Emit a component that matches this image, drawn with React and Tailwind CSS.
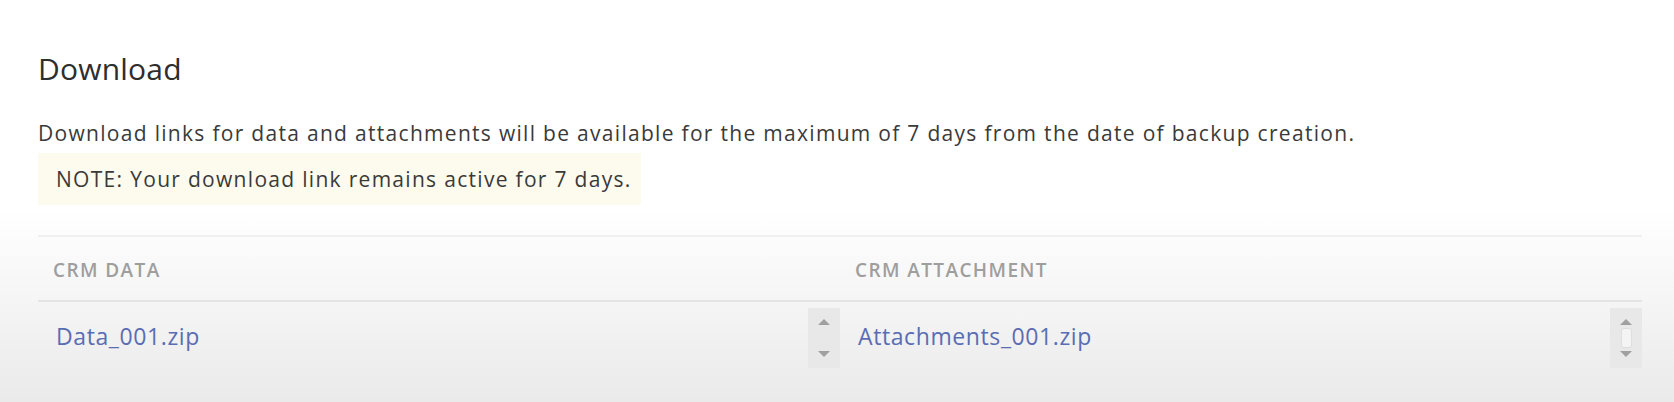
const Spinner = ({ thumb }) => (
  <div className="w-[32px] h-[60px] bg-[#e8e8e8] flex flex-col items-center justify-between py-[11px] shrink-0">
    <span className="w-0 h-0 border-x-[6px] border-x-transparent border-b-[6px] border-b-[#a0a0a0]" />
    {thumb && <span className="w-[11px] flex-1 my-[3px] rounded-[3px] bg-[#f4f4f4] border border-[#dedede]" />}
    <span className="w-0 h-0 border-x-[6px] border-x-transparent border-t-[6px] border-t-[#a0a0a0]" />
  </div>
);

const files = [
  { label: "CRM DATA", file: "Data_001.zip" },
  { label: "CRM ATTACHMENT", file: "Attachments_001.zip" },
];

export default function App() {
  return (
    <div className="w-[1674px] h-[402px] overflow-hidden bg-linear-to-b from-white from-[52%] to-[#eaeaea] font-['Open_Sans',sans-serif] text-[#333]">
      <div className="pl-[38px] pr-[32px] pt-[51px]">
        <h2 className="text-[30px] leading-[36px] tracking-[0.2px] text-[#2e2e2e]">Download</h2>

        <p className="mt-[32px] text-[21px] leading-[28px] tracking-[1.3px] text-[#3a3a3a]">
          Download links for data and attachments will be available for the maximum of 7 days from the date of backup creation.
        </p>

        <div className="mt-[6px] w-[603px] bg-[#fdfbee] pl-[18px] py-[12px] text-[21px] leading-[28px] tracking-[1.3px] text-[#3a3a3a]">
          NOTE: Your download link remains active for 7 days.
        </div>

        <div className="mt-[30px] border-t-2 border-[#f0f0f0]">
          <div className="grid grid-cols-2 h-[65px] items-center border-b-2 border-[#e4e4e4]">
            {files.map((f) => (
              <div key={f.label} className="pl-[15px] pt-[3px] text-[19px] tracking-[1.4px] text-[#9e9e9e] font-semibold">
                {f.label}
              </div>
            ))}
          </div>
          <div className="grid grid-cols-2 pt-[6px]">
            {files.map((f, i) => (
              <div key={f.file} className="flex items-center">
                <a className="flex-1 pl-[18px] pb-[3px] text-[23px] tracking-[0.6px] text-[#5a6db3]">{f.file}</a>
                <Spinner thumb={i === 1} />
              </div>
            ))}
          </div>
        </div>
      </div>
    </div>
  );
}
